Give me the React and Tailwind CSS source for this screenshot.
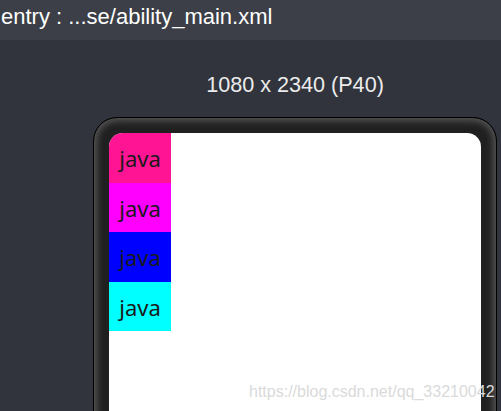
import React from "react";

const blocks = [
  { bg: "bg-[#ff1493]" },
  { bg: "bg-[#ff00ff]" },
  { bg: "bg-[#0000ff]" },
  { bg: "bg-[#00ffff]" },
];

export default function App() {
  return (
    <div className="relative w-[501px] h-[411px] overflow-hidden bg-[#31343c] flex flex-col" style={{ fontFamily: '"Liberation Sans", Arial, sans-serif' }}>
      <div className="h-10 shrink-0 bg-[#3c3f47] pt-[4px] pl-[1px] text-[22px] leading-[25px] text-white whitespace-nowrap">
        entry : ...se/ability_main.xml
      </div>
      <div className="ml-[93px] w-[404px] flex flex-col items-center">
        <div className="mt-[32px] text-[21.6px] leading-[25px] text-[#ececec] whitespace-nowrap">
          1080 x 2340 (P40)
        </div>
        <div className="mt-[20px] w-[404px] h-[400px] shrink-0 rounded-[24px] border border-black bg-[#202020] p-[15px] shadow-[inset_0_0_7px_3px_rgba(95,95,95,0.85)]">
          <div className="h-full w-full rounded-[14px] bg-white overflow-hidden flex flex-col">
            {blocks.map((b, i) => (
              <div
                key={i}
                className={`${b.bg} w-[62px] h-[49.6px] shrink-0 flex items-center justify-center pt-[2px] text-[22px] text-[#1a1a1a]`}
                style={{ fontFamily: '"Noto Sans", "Open Sans", sans-serif' }}
              >
                java
              </div>
            ))}
          </div>
        </div>
      </div>
      <div className="absolute left-[249px] top-[383px] text-[16px] leading-[18px] text-[#dadada] whitespace-nowrap">
        https://blog.csdn.net/qq_33210042
      </div>
    </div>
  );
}
